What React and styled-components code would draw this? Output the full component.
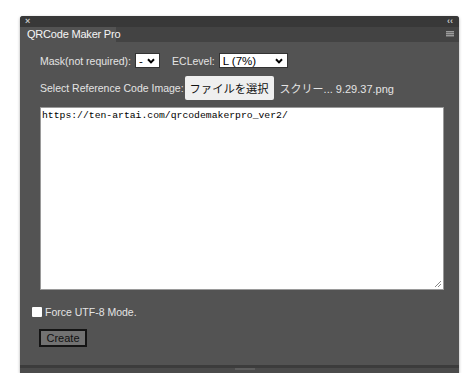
import React from 'react';
import styled, { createGlobalStyle } from 'styled-components';

const GlobalStyle = createGlobalStyle`
  html, body {
    margin: 0;
    padding: 0;
    background: #ffffff;
    font-family: "Liberation Sans", Arial, sans-serif;
  }
`;

const Panel = styled.div`
  margin: 16px 0 0 20px;
  width: 439px;
  height: 357px;
  display: flex;
  flex-direction: column;
  background: #535353;
  border-radius: 3px 3px 0 0;
  box-shadow: 0 1px 3px rgba(0, 0, 0, 0.35);
  overflow: hidden;
`;

const TitleBar = styled.div`
  height: 11px;
  background: #383838;
  display: flex;
  align-items: center;
  justify-content: space-between;
  padding: 0 6px 0 5px;
  color: #c4c4c4;
  font-size: 9px;
  font-weight: bold;
  line-height: 1;
`;

const TabRow = styled.div`
  height: 15px;
  background: #434343;
  display: flex;
  align-items: stretch;
  justify-content: space-between;
`;

const Tab = styled.div`
  width: 96px;
  background: #535353;
  color: #f6f6f6;
  font-size: 11px;
  line-height: 15px;
  padding-left: 7px;
  box-sizing: border-box;
  white-space: nowrap;
  letter-spacing: -0.2px;
`;

const MenuIcon = styled.div`
  width: 8px;
  height: 6px;
  margin: 4px 5px 0 0;
  background: repeating-linear-gradient(#9a9a9a 0 1px, #6a6a6a 1px 2px);
`;

const Content = styled.div`
  flex: 1;
  display: flex;
  flex-direction: column;
  padding: 11px 0 0 20px;
  color: #e4e4e4;
  font-size: 10.5px;
`;

const Row = styled.div`
  display: flex;
  align-items: center;
  height: ${p => p.h}px;
  margin-top: ${p => p.mt || 0}px;
  margin-left: ${p => p.ml || 0}px;
`;

const Label = styled.span`
  margin-right: ${p => p.mr || 0}px;
  white-space: nowrap;
`;

const Select = styled.div`
  width: ${p => p.w}px;
  height: 15px;
  box-sizing: border-box;
  background: #fff;
  color: #000;
  font-size: 11.5px;
  display: flex;
  align-items: center;
  justify-content: space-between;
  padding: 0 4px 0 3px;
  margin-right: ${p => p.mr || 0}px;
  border: 1px solid #333;
`;

const FileButton = styled.div`
  height: 24px;
  width: 89px;
  box-sizing: border-box;
  background: #efefef;
  color: #111;
  font-family: "Liberation Sans", "Noto Sans CJK JP", sans-serif;
  font-size: 11.3px;
  display: flex;
  align-items: center;
  justify-content: center;
  border-radius: 2px;
  margin: 0 6px 0 1px;
`;

const FileName = styled.span`
  font-family: "Liberation Sans", "Noto Sans CJK JP", sans-serif;
  white-space: nowrap;
  font-size: 11px;
`;

const TextArea = styled.div`
  position: relative;
  width: 404px;
  height: 183px;
  box-sizing: border-box;
  margin-top: 7px;
  background: #fff;
  border: 1px solid #9a9a9a;
  color: #000;
  font-family: "Liberation Mono", monospace;
  font-size: 9.75px;
  padding: 2px 1px;
`;

const Grip = styled.svg`
  position: absolute;
  right: 1px;
  bottom: 1px;
`;

const CheckBox = styled.span`
  width: 10px;
  height: 10px;
  background: #fff;
  border-radius: 1px;
  margin-right: 3px;
`;

const CreateButton = styled.div`
  width: 48px;
  height: 18px;
  box-sizing: border-box;
  background: #727272;
  border: 2px solid #141414;
  color: #111;
  font-size: 11px;
  display: flex;
  align-items: center;
  justify-content: center;
`;

const Footer = styled.div`
  height: 8px;
  border-top: 3px solid #3c3c3c;
  background: #4b4b4b;
  box-sizing: border-box;
  display: flex;
  justify-content: center;
`;

const Handle = styled.div`
  width: 20px;
  height: 2px;
  background: #5e5e5e;
  margin-left: 10px;
`;

const Chevron = () => (
  <svg width="8" height="6" viewBox="0 0 8 6">
    <path d="M1 1.2 L4 4.4 L7 1.2" stroke="#000" strokeWidth="2" fill="none" />
  </svg>
);

export default function App() {
  return (
    <>
      <GlobalStyle />
      <Panel>
        <TitleBar>
          <span>×</span>
          <span>‹‹</span>
        </TitleBar>
        <TabRow>
          <Tab>QRCode Maker Pro</Tab>
          <MenuIcon />
        </TabRow>
        <Content>
          <Row h={15}>
            <Label mr={4}>Mask(not required):</Label>
            <Select w={25} mr={12}>
              <span>-</span>
              <Chevron />
            </Select>
            <Label mr={4}>ECLevel:</Label>
            <Select w={69}>
              <span>L (7%)</span>
              <Chevron />
            </Select>
          </Row>
          <Row h={24} mt={8}>
            <Label>Select Reference Code Image:</Label>
            <FileButton>ファイルを選択</FileButton>
            <FileName>スクリー... 9.29.37.png</FileName>
          </Row>
          <TextArea>
            https://ten-artai.com/qrcodemakerpro_ver2/
            <Grip width="8" height="8" viewBox="0 0 8 8">
              <path d="M7 1 L1 7 M7 4 L4 7" stroke="#888" strokeWidth="1" />
            </Grip>
          </TextArea>
          <Row h={12} mt={16} ml={-8}>
            <CheckBox />
            <Label>Force UTF-8 Mode.</Label>
          </Row>
          <Row h={18} mt={11} ml={-1}>
            <CreateButton>Create</CreateButton>
          </Row>
        </Content>
        <Footer>
          <Handle />
        </Footer>
      </Panel>
    </>
  );
}
